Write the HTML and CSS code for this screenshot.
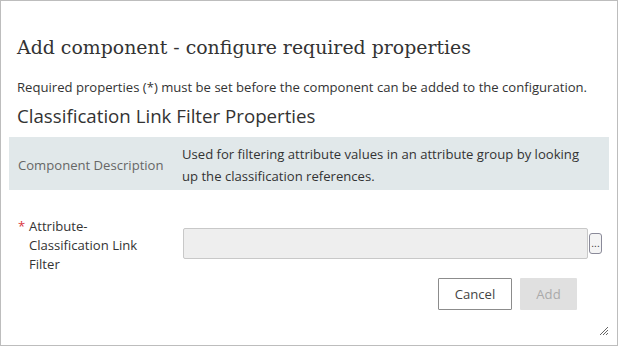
FILE: index.html
```html
<!DOCTYPE html>
<html>
<head>
<meta charset="utf-8">
<link rel="stylesheet" href="styles.css">
</head>
<body>
<div class="dialog">
  <h1 class="title">Add component - configure required properties</h1>
  <p class="intro">Required properties (*) must be set before the component can be added to the configuration.</p>
  <h2 class="section">Classification Link Filter Properties</h2>
  <div class="desc">
    <div class="desc-label">Component Description</div>
    <div class="desc-text">Used for filtering attribute values in an attribute group by looking up the classification references.</div>
  </div>
  <div class="field">
    <div class="field-label"><span class="req">*</span><span class="label-text">Attribute-<wbr>Classification Link Filter</span></div>
    <div class="field-input">
      <div class="input"></div>
      <button class="browse">...</button>
    </div>
  </div>
  <div class="actions">
    <button class="btn cancel">Cancel</button>
    <button class="btn add" disabled>Add</button>
  </div>
  <svg class="grip" width="10" height="10" viewBox="0 0 10 10">
    <path d="M9 1 L1 9 M9 4 L4 9 M9 7 L7 9" stroke="#666" stroke-width="1" fill="none"/>
  </svg>
</div>
</body>
</html>
```
FILE: styles.css
```css
html, body { margin: 0; padding: 0; background: #fff; }
.dialog {
  position: relative;
  width: 618px;
  height: 346px;
  box-sizing: border-box;
  border: 1px solid #bdbdbd;
  padding: 0 8px;
  font-family: "Open Sans", "Noto Sans", sans-serif;
  color: #333;
}
.title {
  margin: 0;
  padding: 34px 0 0 8px;
  font-family: "DejaVu Serif", serif;
  font-weight: normal;
  font-size: 18.9px;
  line-height: 24px;
  color: #333;
  white-space: nowrap;
}
.intro {
  margin: 0;
  padding: 19px 0 0 8px;
  font-size: 13.1px;
  line-height: 18px;
  white-space: nowrap;
}
.section {
  margin: 0;
  padding: 7px 0 0 8px;
  font-weight: normal;
  font-size: 18.7px;
  line-height: 26px;
  color: #333;
}
.desc {
  margin-top: 8px;
  background: #e1e8ea;
  display: flex;
  align-items: center;
  height: 53px;
  box-sizing: border-box;
  padding: 2px 20px 0 9px;
}
.desc-label {
  width: 164px;
  flex: none;
  color: #666;
  font-size: 13.1px;
  white-space: nowrap;
}
.desc-text {
  font-size: 13.1px;
  line-height: 22px;
}
.field {
  display: flex;
  margin-top: 27px;
  padding-left: 8px;
}
.field-label {
  width: 166px;
  flex: none;
  display: flex;
  font-size: 13.1px;
  line-height: 19px;
}
.req { color: #d9363e; width: 11px; flex: none; padding-left: 1px; }
.label-text { width: 125px; }
.field-input {
  display: flex;
  align-items: center;
  padding-top: 10px;
  height: 33px;
}
.input {
  width: 403px;
  height: 29px;
  background: #eee;
  border: 1px solid #c8c8c8;
  border-radius: 2px;
}
.browse {
  margin-left: 1px;
  width: 13px;
  height: 21px;
  padding: 0;
  border: 1px solid #8a8a99;
  border-radius: 3px;
  background: #f4f4f4;
  font-size: 10px;
  line-height: 18px;
  color: #333;
}
.actions {
  display: flex;
  justify-content: flex-end;
  gap: 8px;
  padding-right: 32px;
  margin-top: 4px;
}
.btn {
  height: 32px;
  font-family: inherit;
  font-size: 13.1px;
  border-radius: 1px;
}
.cancel {
  width: 74px;
  background: #fff;
  border: 1px solid #8c8c8c;
  color: #444;
}
.add {
  width: 57px;
  background: #e0e0e0;
  border: none;
  color: #aaa;
}
.grip { position: absolute; right: 8px; bottom: 9px; }
```
